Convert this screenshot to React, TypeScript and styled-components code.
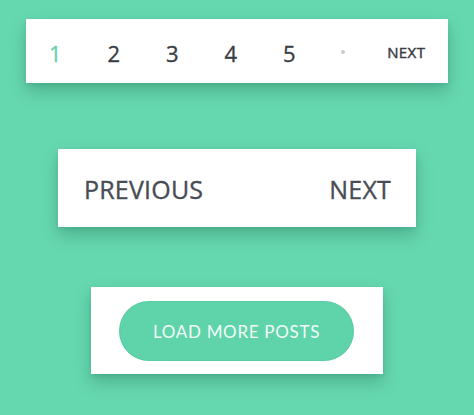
import React from "react";
import styled, { createGlobalStyle } from "styled-components";

const GlobalStyle = createGlobalStyle`
  html, body {
    margin: 0;
    padding: 0;
    background: #66d8b0;
  }
  * { box-sizing: border-box; }
`;

const Page = styled.main`
  width: 474px;
  height: 415px;
  background: #66d8b0;
  display: flex;
  flex-direction: column;
  align-items: center;
  padding-top: 19px;
  font-family: "Open Sans", "Liberation Sans", sans-serif;
`;

const Card = styled.div<{ $w: number; $h: number; $mt?: number }>`
  width: ${(p) => p.$w}px;
  height: ${(p) => p.$h}px;
  margin-top: ${(p) => p.$mt ?? 0}px;
  background: #ffffff;
  box-shadow: 0 8px 16px rgba(20, 90, 65, 0.3), 0 2px 4px rgba(20, 90, 65, 0.12);
`;

const Pager = styled(Card)`
  display: grid;
  grid-template-columns: repeat(7, 58.5px);
  align-items: center;
  padding-top: 3px;
`;

const PageNum = styled.span<{ $active?: boolean }>`
  justify-self: center;
  font-size: 22px;
  line-height: 1;
  -webkit-text-stroke: 0.35px currentColor;
  color: ${(p) => (p.$active ? "#68cfa8" : "#3a3d44")};
`;

const Dot = styled.span`
  justify-self: center;
  margin-right: 9px;
  margin-top: -1px;
  width: 4px;
  height: 4px;
  border-radius: 50%;
  background: #c9cccc;
`;

const SmallNext = styled.span`
  justify-self: center;
  font-size: 15px;
  line-height: 1;
  -webkit-text-stroke: 0.45px currentColor;
  letter-spacing: 0.4px;
  color: #3a3d44;
`;

const PrevNext = styled(Card)`
  display: flex;
  align-items: center;
  justify-content: space-between;
  padding: 3px 25px 0 26px;
`;

const BigLink = styled.span`
  font-size: 25px;
  line-height: 1;
  letter-spacing: 0.2px;
  -webkit-text-stroke: 0.35px currentColor;
  color: #494c55;
`;

const LoadCard = styled(Card)`
  display: flex;
  padding: 14px 29px 13px 28px;
`;

const LoadButton = styled.button`
  flex: 1;
  border: none;
  border-radius: 30px;
  background: #5fd3a9;
  color: #f2fcf8;
  font-family: "Lato", "Liberation Sans", sans-serif;
  font-size: 17px;
  letter-spacing: 0.7px;
  padding: 1px 0 0;
  box-shadow: inset 0 0 0 1px rgba(60, 170, 130, 0.15);
`;

export default function App() {
  return (
    <>
      <GlobalStyle />
      <Page>
        <Pager $w={422} $h={64}>
          <PageNum $active>1</PageNum>
          <PageNum>2</PageNum>
          <PageNum>3</PageNum>
          <PageNum>4</PageNum>
          <PageNum>5</PageNum>
          <Dot />
          <SmallNext>NEXT</SmallNext>
        </Pager>
        <PrevNext $w={358} $h={78} $mt={66}>
          <BigLink>PREVIOUS</BigLink>
          <BigLink>NEXT</BigLink>
        </PrevNext>
        <LoadCard $w={292} $h={87} $mt={60}>
          <LoadButton>LOAD MORE POSTS</LoadButton>
        </LoadCard>
      </Page>
    </>
  );
}
